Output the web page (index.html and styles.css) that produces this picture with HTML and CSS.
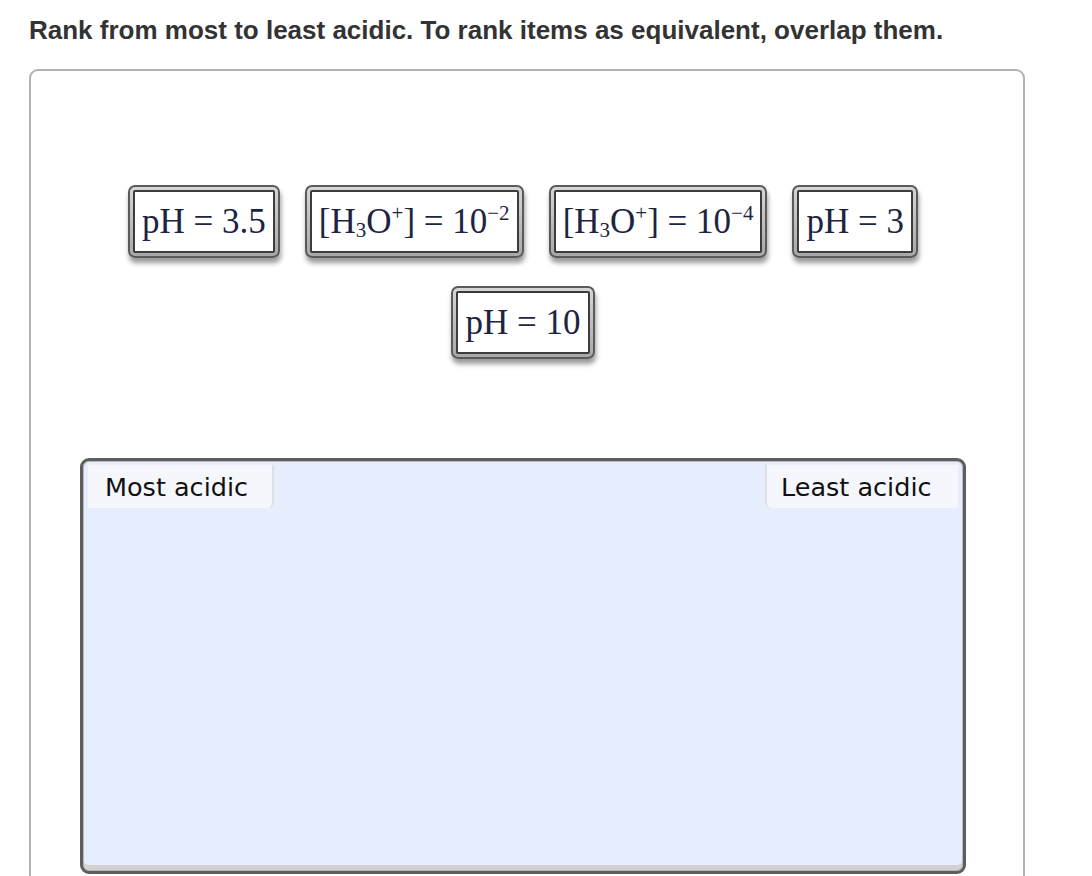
FILE: index.html
```html
<!DOCTYPE html>
<html lang="en">
<head>
  <meta charset="UTF-8">
  <meta name="viewport" content="width=device-width, initial-scale=1.0">
  <title>Ranking</title>
  <link rel="stylesheet" href="styles.css">
</head>
<body>
<div class="page">
  <h1 class="prompt">Rank from most to least acidic. To rank items as equivalent, overlap them.</h1>

  <div class="board">
    <!-- Items waiting to be ranked -->
    <div class="pool">
      <div class="tile"><div class="tile-face">pH = 3.5</div></div>
      <div class="tile"><div class="tile-face">[H<sub>3</sub>O<sup>+</sup>] = 10<sup>&minus;2</sup></div></div>
      <div class="tile"><div class="tile-face">[H<sub>3</sub>O<sup>+</sup>] = 10<sup>&minus;4</sup></div></div>
      <div class="tile"><div class="tile-face">pH = 3</div></div>
      <div class="tile"><div class="tile-face">pH = 10</div></div>
    </div>

    <!-- Drop area -->
    <div class="rank-area">
      <div class="rank-labels">
        <div class="rank-label left">Most acidic</div>
        <div class="rank-label right">Least acidic</div>
      </div>
    </div>
  </div>
</div>
</body>
</html>
```

FILE: styles.css
```css
* { margin: 0; padding: 0; box-sizing: border-box; }
body { background: #fff; overflow: hidden; font-family: 'Liberation Sans', Arial, sans-serif; }

.page {
  width: 996px;
  margin-left: 29px;
  padding-top: 16px;
}

.prompt {
  font-size: 26px;
  font-weight: bold;
  color: #333;
  line-height: 29px;
  margin-bottom: 24px;
}

/* Outer question box */
.board {
  border: 2px solid #b3b3b3;
  border-radius: 9px;
  padding: 114px 57px 40px 49px;
  height: 900px;
}

/* Tiles */
.pool {
  display: flex;
  flex-wrap: wrap;
  justify-content: center;
  gap: 28px 25px;
  padding: 0 40px;
}
.tile {
  border: 2px solid #5a5a5a;
  border-radius: 7px;
  background: linear-gradient(#d6d6d6, #a8a8a8);
  padding: 3px;
  box-shadow: 1px 5px 5px rgba(0, 0, 0, 0.4);
}
.tile-face {
  background: #fff;
  border: 2px solid #3c3c3c;
  border-radius: 2px;
  padding: 12px 7px 11px;
  font-family: 'Liberation Serif', 'Times New Roman', serif;
  font-size: 35px;
  line-height: 36px;
  color: #1c2442;
  white-space: nowrap;
}
.tile-face sub, .tile-face sup {
  font-size: 0.6em;
  line-height: 0;
}
.tile-face sub { vertical-align: -0.2em; }
.tile-face sup { vertical-align: 0.6em; }

/* Ranking strip */
.rank-area {
  margin-top: 99px;
  height: 416px;
  background: #e6edfc;
  border: 3px solid #5e5e5e;
  border-radius: 9px;
  box-shadow: inset 0 0 0 1px #b8b8b8, inset 0 -6px 0 #d2d2d2;
  padding: 4px 5px;
}
.rank-labels {
  display: flex;
  justify-content: space-between;
}
.rank-label {
  background: #f5f7fd;
  font-family: 'DejaVu Sans', Verdana, sans-serif;
  font-size: 25.5px;
  color: #111;
  height: 43px;
  line-height: 45px;
}
.rank-label.left {
  width: 186px;
  padding-left: 17px;
  border-right: 2px solid #dcdfe6;
  border-bottom-right-radius: 6px;
}
.rank-label.right {
  width: 193px;
  padding-left: 14px;
  border-left: 2px solid #dcdfe6;
  border-bottom-left-radius: 6px;
}
```
